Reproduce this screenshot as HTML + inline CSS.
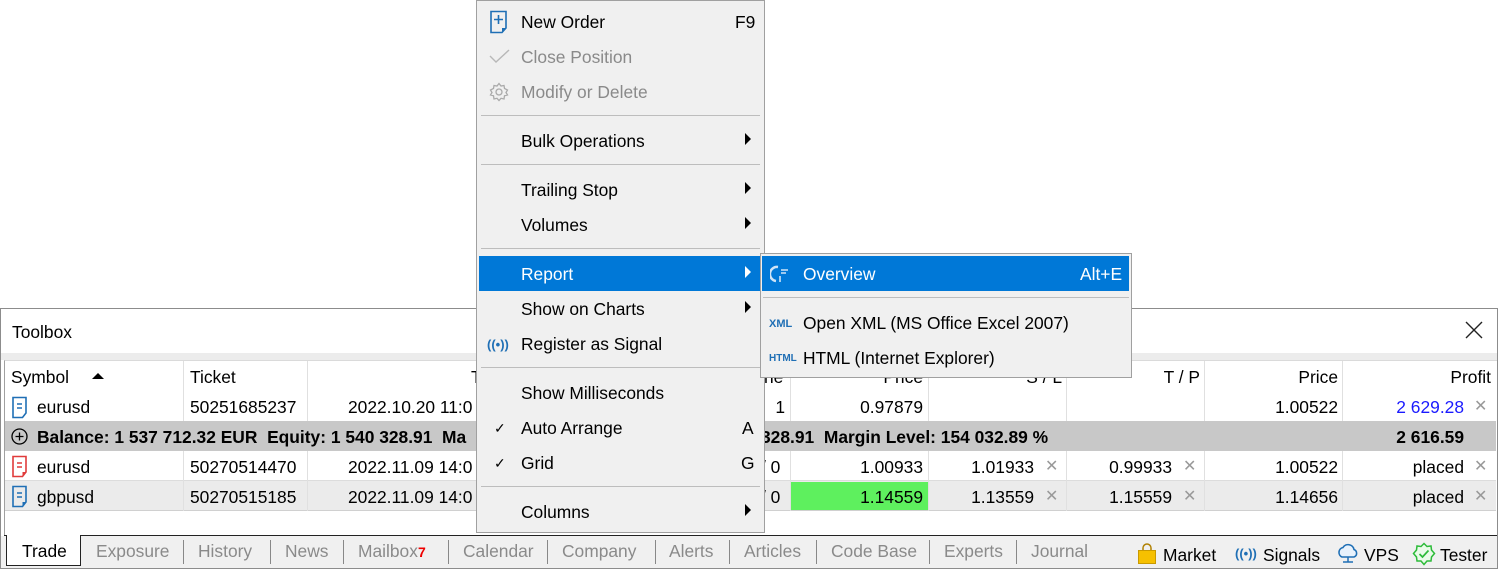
<!DOCTYPE html>
<html><head><meta charset="utf-8"><style>
*{margin:0;padding:0;box-sizing:border-box}
body{width:1500px;height:570px;background:#fff;position:relative;overflow:hidden;font-family:"Liberation Sans",sans-serif;font-size:17.4px;color:#000}
.a{position:absolute;white-space:nowrap;line-height:22px}
.r{text-align:right}
.bx{position:absolute}
.g{color:#8a8a8a}
.x{color:#999;font-size:16px}
</style></head><body>

<div class="bx" style="left:0;top:308px;width:1498px;height:261px;border:1px solid #8c8c8c;background:#fff"></div>
<div class="a" style="left:12px;top:321px">Toolbox</div>
<svg class="bx" style="left:1465px;top:321px" width="18" height="18"><path d="M1 1L17 17M17 1L1 17" stroke="#222" stroke-width="1.4"/></svg>
<div class="bx" style="left:1px;top:353px;width:1496px;height:7px;background:#ececec"></div>
<div class="bx" style="left:4px;top:360px;width:1493px;height:176px;border-left:1px solid #a0a0a0;border-top:1px solid #dadada;background:#fff"></div>
<div class="bx" style="left:5px;top:421px;width:1491px;height:30px;background:#c8c8c8"></div>
<div class="bx" style="left:5px;top:481px;width:1491px;height:30px;background:#ebebeb"></div>
<div class="bx" style="left:791px;top:482px;width:137px;height:29px;background:#5ef05e"></div>
<div class="bx" style="left:5px;top:480px;width:1491px;height:1px;background:#dcdcdc"></div>
<div class="bx" style="left:5px;top:510px;width:1491px;height:1px;background:#d0d0d0"></div>
<div class="bx" style="left:183px;top:361px;width:1px;height:60px;background:#e0e0e0"></div>
<div class="bx" style="left:183px;top:451px;width:1px;height:60px;background:#e0e0e0"></div>
<div class="bx" style="left:307px;top:361px;width:1px;height:60px;background:#e0e0e0"></div>
<div class="bx" style="left:307px;top:451px;width:1px;height:60px;background:#e0e0e0"></div>
<div class="bx" style="left:790px;top:361px;width:1px;height:60px;background:#e0e0e0"></div>
<div class="bx" style="left:790px;top:451px;width:1px;height:60px;background:#e0e0e0"></div>
<div class="bx" style="left:928px;top:361px;width:1px;height:60px;background:#e0e0e0"></div>
<div class="bx" style="left:928px;top:451px;width:1px;height:60px;background:#e0e0e0"></div>
<div class="bx" style="left:1066px;top:361px;width:1px;height:60px;background:#e0e0e0"></div>
<div class="bx" style="left:1066px;top:451px;width:1px;height:60px;background:#e0e0e0"></div>
<div class="bx" style="left:1204px;top:361px;width:1px;height:60px;background:#e0e0e0"></div>
<div class="bx" style="left:1204px;top:451px;width:1px;height:60px;background:#e0e0e0"></div>
<div class="bx" style="left:1342px;top:361px;width:1px;height:60px;background:#e0e0e0"></div>
<div class="bx" style="left:1342px;top:451px;width:1px;height:60px;background:#e0e0e0"></div>

<div class="a" style="left:11px;top:366px">Symbol</div>
<svg class="bx" style="left:92px;top:372px" width="12" height="8"><path d="M0 7L6 1L12 7Z" fill="#000"/></svg>
<div class="a" style="left:190px;top:366px">Ticket</div>
<div class="a" style="left:471px;top:366px">T</div>
<div class="a" style="left:764px;top:366px">ne</div>
<div class="a r" style="left:840px;width:83px;top:366px">Price</div>
<div class="a r" style="left:980px;width:82px;top:366px">S / L</div>
<div class="a r" style="left:1110px;width:90px;top:366px">T / P</div>
<div class="a r" style="left:1240px;width:98px;top:366px">Price</div>
<div class="a r" style="left:1380px;width:111px;top:366px">Profit</div>

<svg class="bx" style="left:11px;top:396px" width="18" height="23"><path d="M2 1.5H15V17L11.5 21.5H2Z" fill="none" stroke="#1f6fb5" stroke-width="1.6"/><path d="M6 8H11M6 12H11" stroke="#1f6fb5" stroke-width="1.5"/></svg>
<svg class="bx" style="left:11px;top:455px" width="18" height="23"><path d="M2 1.5H15V17L11.5 21.5H2Z" fill="none" stroke="#e03b3b" stroke-width="1.6"/><path d="M6 8H11M6 12H11" stroke="#e03b3b" stroke-width="1.5"/><path d="M15 17L11.5 21.5V17Z" fill="#e03b3b"/></svg>
<svg class="bx" style="left:11px;top:485px" width="18" height="23"><path d="M2 1.5H15V17L11.5 21.5H2Z" fill="none" stroke="#1f6fb5" stroke-width="1.6"/><path d="M6 8H11M6 12H11" stroke="#1f6fb5" stroke-width="1.5"/><path d="M15 17L11.5 21.5V17Z" fill="#1f6fb5"/></svg>

<div class="a" style="left:37px;top:396px">eurusd</div>
<div class="a" style="left:190px;top:396px">50251685237</div>
<div class="a" style="left:348px;top:396px">2022.10.20 11:0</div>
<div class="a r" style="left:760px;width:25px;top:396px">1</div>
<div class="a r" style="left:840px;width:83px;top:396px">0.97879</div>
<div class="a r" style="left:1240px;width:98px;top:396px">1.00522</div>
<div class="a r" style="left:1360px;width:104px;top:396px;color:#1a1aff">2 629.28</div>
<div class="a x" style="left:1474px;top:396px">✕</div>

<svg class="bx" style="left:11px;top:428px" width="17" height="17"><circle cx="8.5" cy="8.5" r="7.5" fill="none" stroke="#000" stroke-width="1.3"/><path d="M4.5 8.5H12.5M8.5 4.5V12.5" stroke="#000" stroke-width="1.3"/></svg>
<div class="a" style="left:37px;top:426px;font-weight:bold">Balance: 1 537 712.32 EUR&nbsp; Equity: 1 540 328.91&nbsp; Ma</div>
<div class="a" style="left:761px;top:426px;font-weight:bold">328.91&nbsp; Margin Level: 154 032.89 %</div>
<div class="a r" style="left:1360px;width:104px;top:426px;font-weight:bold">2 616.59</div>

<div class="a" style="left:37px;top:456px">eurusd</div>
<div class="a" style="left:190px;top:456px">50270514470</div>
<div class="a" style="left:348px;top:456px">2022.11.09 14:0</div>
<div class="a" style="left:761px;top:456px">/ 0</div>
<div class="a r" style="left:840px;width:83px;top:456px">1.00933</div>
<div class="a r" style="left:940px;width:94px;top:456px">1.01933</div>
<div class="a x" style="left:1045px;top:456px">✕</div>
<div class="a r" style="left:1080px;width:92px;top:456px">0.99933</div>
<div class="a x" style="left:1183px;top:456px">✕</div>
<div class="a r" style="left:1240px;width:98px;top:456px">1.00522</div>
<div class="a r" style="left:1360px;width:104px;top:456px">placed</div>
<div class="a x" style="left:1474px;top:456px">✕</div>

<div class="a" style="left:37px;top:486px">gbpusd</div>
<div class="a" style="left:190px;top:486px">50270515185</div>
<div class="a" style="left:348px;top:486px">2022.11.09 14:0</div>
<div class="a" style="left:761px;top:486px">/ 0</div>
<div class="a r" style="left:840px;width:83px;top:486px">1.14559</div>
<div class="a r" style="left:940px;width:94px;top:486px">1.13559</div>
<div class="a x" style="left:1045px;top:486px">✕</div>
<div class="a r" style="left:1080px;width:92px;top:486px">1.15559</div>
<div class="a x" style="left:1183px;top:486px">✕</div>
<div class="a r" style="left:1240px;width:98px;top:486px">1.14656</div>
<div class="a r" style="left:1360px;width:104px;top:486px">placed</div>
<div class="a x" style="left:1474px;top:486px">✕</div>

<div class="bx" style="left:1px;top:536px;width:1496px;height:32px;background:#f0f0f0"></div>
<div class="bx" style="left:4px;top:535px;width:1493px;height:1px;background:#222"></div>
<div class="bx" style="left:6px;top:535px;width:75px;height:31px;background:#fff;border:1px solid #222;border-top:none"></div>
<div class="a" style="left:22px;top:540px">Trade</div>
<div class="a g" style="left:96px;top:540px">Exposure</div>
<div class="a g" style="left:198px;top:540px">History</div>
<div class="a g" style="left:285px;top:540px">News</div>
<div class="a g" style="left:358px;top:540px">Mailbox<b style="color:#e00;font-size:14px">7</b></div>
<div class="a g" style="left:463px;top:540px">Calendar</div>
<div class="a g" style="left:562px;top:540px">Company</div>
<div class="a g" style="left:669px;top:540px">Alerts</div>
<div class="a g" style="left:744px;top:540px">Articles</div>
<div class="a g" style="left:831px;top:540px">Code Base</div>
<div class="a g" style="left:944px;top:540px">Experts</div>
<div class="a g" style="left:1031px;top:540px">Journal</div>
<div class="bx" style="left:183px;top:540px;width:1px;height:24px;background:#888"></div>
<div class="bx" style="left:270px;top:540px;width:1px;height:24px;background:#888"></div>
<div class="bx" style="left:343px;top:540px;width:1px;height:24px;background:#888"></div>
<div class="bx" style="left:448px;top:540px;width:1px;height:24px;background:#888"></div>
<div class="bx" style="left:547px;top:540px;width:1px;height:24px;background:#888"></div>
<div class="bx" style="left:655px;top:540px;width:1px;height:24px;background:#888"></div>
<div class="bx" style="left:729px;top:540px;width:1px;height:24px;background:#888"></div>
<div class="bx" style="left:816px;top:540px;width:1px;height:24px;background:#888"></div>
<div class="bx" style="left:929px;top:540px;width:1px;height:24px;background:#888"></div>
<div class="bx" style="left:1016px;top:540px;width:1px;height:24px;background:#888"></div>

<svg class="bx" style="left:1137px;top:543px" width="20" height="22"><path d="M6 8V5a4 4 0 0 1 8 0V8" fill="none" stroke="#b08000" stroke-width="1.5"/><rect x="1.5" y="7.5" width="17" height="13" fill="#f6c000" stroke="#c99a00"/></svg>
<div class="a" style="left:1163px;top:544px">Market</div>
<div class="a" style="left:1235px;top:543px;color:#1f6fb5;font-size:13px;font-weight:bold">((•))</div>
<div class="a" style="left:1263px;top:544px">Signals</div>
<svg class="bx" style="left:1336px;top:543px" width="24" height="22"><path d="M6 14a5 5 0 0 1 1-9.5 6 6 0 0 1 11 2 4 4 0 0 1 0 7.5Z" fill="#e8f2fc" stroke="#1f6fb5" stroke-width="1.6"/><path d="M12 14V19M7 19H17" stroke="#1f6fb5" stroke-width="1.5"/></svg>
<div class="a" style="left:1364px;top:544px">VPS</div>
<svg class="bx" style="left:1412px;top:542px" width="24" height="24"><path d="M12 1.5L15 4.5L19 4L19.5 8L22.5 11.5L19.5 15L19 19L15 19L12 22.5L9 19L5 19L4.5 15L1.5 11.5L4.5 8L5 4L9 4.5Z" fill="#eafbe9" stroke="#2dbb3a" stroke-width="1.5"/><path d="M7.5 12L10.5 15L16.5 8.5" fill="none" stroke="#2dbb3a" stroke-width="1.7"/></svg>
<div class="a" style="left:1440px;top:544px">Tester</div>

<div class="bx" style="left:476px;top:0;width:289px;height:533px;background:#f0f0f0;border:1px solid #a0a0a0"></div>
<div class="bx" style="left:481px;top:115px;width:279px;height:1px;background:#bdbdbd"></div>
<div class="bx" style="left:481px;top:164px;width:279px;height:1px;background:#bdbdbd"></div>
<div class="bx" style="left:481px;top:248px;width:279px;height:1px;background:#bdbdbd"></div>
<div class="bx" style="left:481px;top:367px;width:279px;height:1px;background:#bdbdbd"></div>
<div class="bx" style="left:481px;top:486px;width:279px;height:1px;background:#bdbdbd"></div>
<div class="bx" style="left:479px;top:256px;width:282px;height:35px;background:#0078d7"></div>

<svg class="bx" style="left:489px;top:10px" width="20" height="24"><path d="M2 1.5H17V18L13 22.5H2Z" fill="none" stroke="#1f6fb5" stroke-width="1.6"/><path d="M5 9.5H14M9.5 5V14" stroke="#1f6fb5" stroke-width="1.6"/><path d="M17 18L13 22.5V18Z" fill="#1f6fb5"/></svg>
<div class="a" style="left:521px;top:11px">New Order</div>
<div class="a" style="left:735px;top:11px">F9</div>
<svg class="bx" style="left:489px;top:49px" width="22" height="16"><path d="M1 7L7 13L20 1" fill="none" stroke="#b8b8b8" stroke-width="1.4"/></svg>
<div class="a g" style="left:521px;top:46px">Close Position</div>
<svg class="bx" style="left:489px;top:82px" width="20" height="20"><circle cx="10" cy="10" r="3" fill="none" stroke="#aaa" stroke-width="1.3"/><path d="M10 1.5L12 4L15 3.5L15.5 6.5L18.5 8L17 10.5L18.5 13L15.5 13.8L15 17L12 16.3L10 18.5L8 16.3L5 17L4.5 13.8L1.5 13L3 10.5L1.5 8L4.5 6.5L5 3.5L8 4Z" fill="none" stroke="#aaa" stroke-width="1.3"/></svg>
<div class="a g" style="left:521px;top:81px">Modify or Delete</div>
<div class="a" style="left:521px;top:130px">Bulk Operations</div>
<div class="a" style="left:521px;top:179px">Trailing Stop</div>
<div class="a" style="left:521px;top:214px">Volumes</div>
<div class="a" style="left:521px;top:263px;color:#fff">Report</div>
<div class="a" style="left:521px;top:298px">Show on Charts</div>
<div class="a" style="left:487px;top:334px;color:#1f6fb5;font-size:13px;font-weight:bold">((•))</div>
<div class="a" style="left:521px;top:333px">Register as Signal</div>
<div class="a" style="left:521px;top:382px">Show Milliseconds</div>
<div class="a" style="left:494px;top:417px;font-size:14px">✓</div>
<div class="a" style="left:521px;top:417px">Auto Arrange</div>
<div class="a" style="left:742px;top:417px">A</div>
<div class="a" style="left:494px;top:452px;font-size:14px">✓</div>
<div class="a" style="left:521px;top:452px">Grid</div>
<div class="a" style="left:741px;top:452px">G</div>
<div class="a" style="left:521px;top:501px">Columns</div>
<svg class="bx" style="left:744px;top:133px" width="8" height="12"><path d="M1 0L7 6L1 12Z" fill="#000"/></svg>
<svg class="bx" style="left:744px;top:182px" width="8" height="12"><path d="M1 0L7 6L1 12Z" fill="#000"/></svg>
<svg class="bx" style="left:744px;top:217px" width="8" height="12"><path d="M1 0L7 6L1 12Z" fill="#000"/></svg>
<svg class="bx" style="left:744px;top:266px" width="8" height="12"><path d="M1 0L7 6L1 12Z" fill="#fff"/></svg>
<svg class="bx" style="left:744px;top:301px" width="8" height="12"><path d="M1 0L7 6L1 12Z" fill="#000"/></svg>
<svg class="bx" style="left:744px;top:504px" width="8" height="12"><path d="M1 0L7 6L1 12Z" fill="#000"/></svg>

<div class="bx" style="left:760px;top:253px;width:372px;height:125px;background:#f0f0f0;border:1px solid #a0a0a0"></div>
<div class="bx" style="left:762px;top:256px;width:367px;height:35px;background:#0078d7"></div>
<div class="bx" style="left:763px;top:297px;width:366px;height:1px;background:#bdbdbd"></div>
<svg class="bx" style="left:770px;top:264px" width="22" height="20"><path d="M8 3A7 7 0 0 0 6 17" fill="none" stroke="#cfe4f7" stroke-width="2.5"/><path d="M11 6H18M11 9H16M10 12V18" stroke="#cfe4f7" stroke-width="1.6"/></svg>
<div class="a" style="left:803px;top:263px;color:#fff">Overview</div>
<div class="a" style="left:1080px;top:263px;color:#fff">Alt+E</div>
<div class="a" style="left:769px;top:313px;color:#1f6fb5;font-size:11px;font-weight:bold">XML</div>
<div class="a" style="left:803px;top:312px">Open XML (MS Office Excel 2007)</div>
<div class="a" style="left:769px;top:348px;color:#1f6fb5;font-size:10px;font-weight:bold">HTML</div>
<div class="a" style="left:803px;top:347px">HTML (Internet Explorer)</div>

</body></html>
